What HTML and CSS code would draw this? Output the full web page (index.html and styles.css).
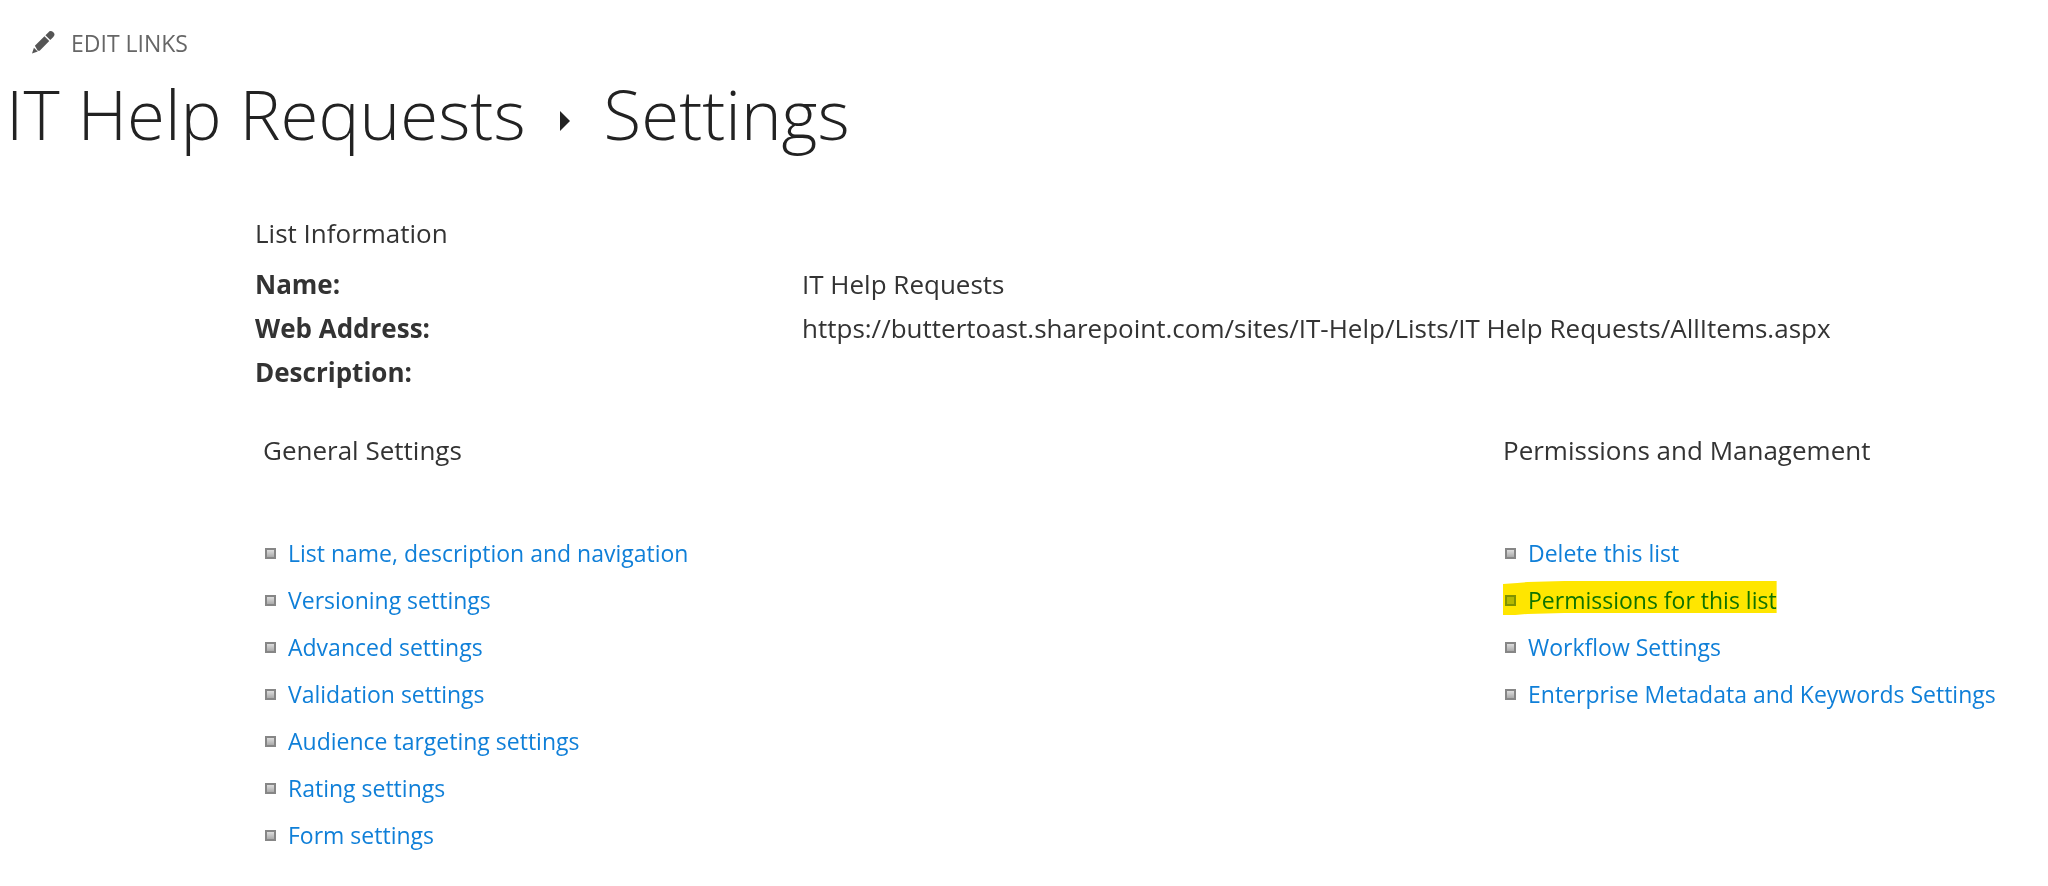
FILE: index.html
```html
<!DOCTYPE html>
<html lang="en">
<head>
<meta charset="utf-8">
<title>IT Help Requests - Settings</title>
<link rel="stylesheet" href="styles.css">
</head>
<body>
<header class="page-header">
  <a class="edit-links" href="#">
    <svg class="pencil" viewBox="0 0 24 24" aria-hidden="true">
      <path d="M0 24 L2 18 L6 22 Z M3 16 L13 6 L18 11 L8 21 L6 21 Z M14 5 L17 2 Q19 -0.500 22 1.500 Q25 4 22 7 L19 10 Z"/>
    </svg>
    <span>EDIT LINKS</span>
  </a>
  <h1 class="title">
    <span>IT Help Requests</span>
    <svg class="arrow" viewBox="0 0 10 20" aria-hidden="true"><path d="M0 0 L10 10 L0 20 Z"/></svg>
    <span>Settings</span>
  </h1>
</header>
<main class="content">
  <section class="info">
    <h2 class="heading">List Information</h2>
    <dl class="facts">
      <dt>Name:</dt><dd>IT Help Requests</dd>
      <dt>Web Address:</dt><dd>https://buttertoast.sharepoint.com/sites/IT-Help/Lists/IT Help Requests/AllItems.aspx</dd>
      <dt>Description:</dt><dd></dd>
    </dl>
  </section>
  <div class="settings">
    <section>
      <h2 class="heading">General Settings</h2>
      <ul class="links">
        <li><a href="#">List name, description and navigation</a></li>
        <li><a href="#">Versioning settings</a></li>
        <li><a href="#">Advanced settings</a></li>
        <li><a href="#">Validation settings</a></li>
        <li><a href="#">Audience targeting settings</a></li>
        <li><a href="#">Rating settings</a></li>
        <li><a href="#">Form settings</a></li>
      </ul>
    </section>
    <section>
      <h2 class="heading">Permissions and Management</h2>
      <ul class="links">
        <li><a href="#">Delete this list</a></li>
        <li class="marked"><a href="#">Permissions for this list</a>
          <svg class="marker" viewBox="0 0 268 34" preserveAspectRatio="none" aria-hidden="true"><path d="M0 3 L14 2 L24 1 L60 0 H268 V32 H60 L24 33 L12 34 H0 Z"/></svg>
        </li>
        <li><a href="#">Workflow Settings</a></li>
        <li><a href="#">Enterprise Metadata and Keywords Settings</a></li>
      </ul>
    </section>
  </div>
</main>
</body>
</html>
```
FILE: styles.css
```css
* { box-sizing: border-box; }

body {
  margin: 0;
  background: #fff;
  color: #333;
  font-family: "Open Sans", "Noto Sans", sans-serif;
  font-size: 26px;
  line-height: 44px;
}

h1, h2, dl, dd, ul { margin: 0; padding: 0; }

a { color: #0f7fd8; text-decoration: none; }
a:hover { text-decoration: underline; }

.page-header { padding: 27px 6px 0; }

.edit-links {
  display: flex;
  align-items: flex-start;
  gap: 16px;
  width: fit-content;
  padding-left: 26px;
  color: #666;
  font-size: 23px;
  line-height: 32px;
}

.pencil { width: 23px; height: 24px; margin-top: 3px; fill: #555; }

.title {
  display: flex;
  align-items: center;
  gap: 34px;
  padding-top: 12px;
  color: #222;
  font-size: 69px;
  font-weight: 300;
  line-height: 84px;
}

.arrow { width: 10px; height: 20px; margin-top: 16px; fill: #222; }

.content { padding: 56px 8px 0 255px; }

.heading { font-size: 26px; font-weight: 400; line-height: 44px; }

.facts {
  display: grid;
  grid-template-columns: 547fr 1238fr;
  padding-top: 7px;
}

.facts dt { font-weight: 700; }

.settings {
  display: grid;
  grid-template-columns: 1240fr 537fr;
  padding: 34px 0 0 8px;
}

.links {
  padding-top: 58px;
  list-style: none;
  font-size: 23px;
  line-height: 47px;
}

.links li {
  position: relative;
  display: flex;
  align-items: center;
  gap: 12px;
  width: fit-content;
  padding-left: 2px;
  white-space: nowrap;
}

.links li::before {
  content: "";
  box-sizing: border-box;
  width: 11px;
  height: 11px;
  border: 2px solid #868686;
  background: linear-gradient(#ddd, #aaa);
}

.links .marked::before {
  border-color: #80a286;
  background: #b4cc90;
}

.marker {
  position: absolute;
  top: 4px;
  left: 0;
  width: 100%;
  height: 34px;
  fill: #ffe600;
  mix-blend-mode: multiply;
  pointer-events: none;
}
```
